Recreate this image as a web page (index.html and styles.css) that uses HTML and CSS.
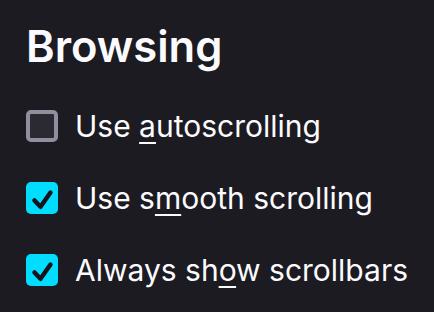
FILE: index.html
```html
<html>

<head>
    <link rel="stylesheet" href="styles.css">
</head>

<body>
    <h1 class="title">Browsing</h1>
    <div class="options">
        <label class="option">
            <span class="box"></span>
            <span class="text">Use <span class="key">a</span>utoscrolling</span>
        </label>
        <label class="option">
            <span class="box checked">
                <svg viewBox="0 0 32 32" width="32" height="32"><path d="M8.5 18.5 L14.5 24.8 L24.5 10.5" /></svg>
            </span>
            <span class="text">Use s<span class="key">m</span>ooth scrolling</span>
        </label>
        <label class="option">
            <span class="box checked">
                <svg viewBox="0 0 32 32" width="32" height="32"><path d="M8.5 18.5 L14.5 24.8 L24.5 10.5" /></svg>
            </span>
            <span class="text">Always sh<span class="key">o</span>w scrollbars</span>
        </label>
    </div>
</body>

</html>
```

FILE: styles.css
```css
body {
    margin: 0;
    padding: 0 0 0 26px;
    background: #1c1b22;
    color: #fbfbfe;
    font-family: Inter, "Noto Sans", sans-serif;
}

.title {
    margin: 0 0 18px;
    padding-top: 21px;
    font-size: 43.5px;
    font-weight: 600;
    line-height: 51px;
}

.options {
    display: flex;
    flex-direction: column;
}

.option {
    display: flex;
    align-items: center;
    height: 72px;
    gap: 17px;
}

.box {
    box-sizing: border-box;
    width: 32px;
    height: 32px;
    flex: none;
    border: 4px solid #8f8f9d;
    border-radius: 5px;
    background: #2b2a33;
}

.box.checked {
    border: none;
    background: #00ddff;
}

.box svg {
    display: block;
}

.box path {
    fill: none;
    stroke: #15141a;
    stroke-width: 4.5;
    stroke-linecap: round;
    stroke-linejoin: round;
}

.text {
    font-size: 30px;
}

.key {
    text-decoration: underline;
    text-decoration-thickness: 2px;
    text-underline-offset: 5px;
}
```
